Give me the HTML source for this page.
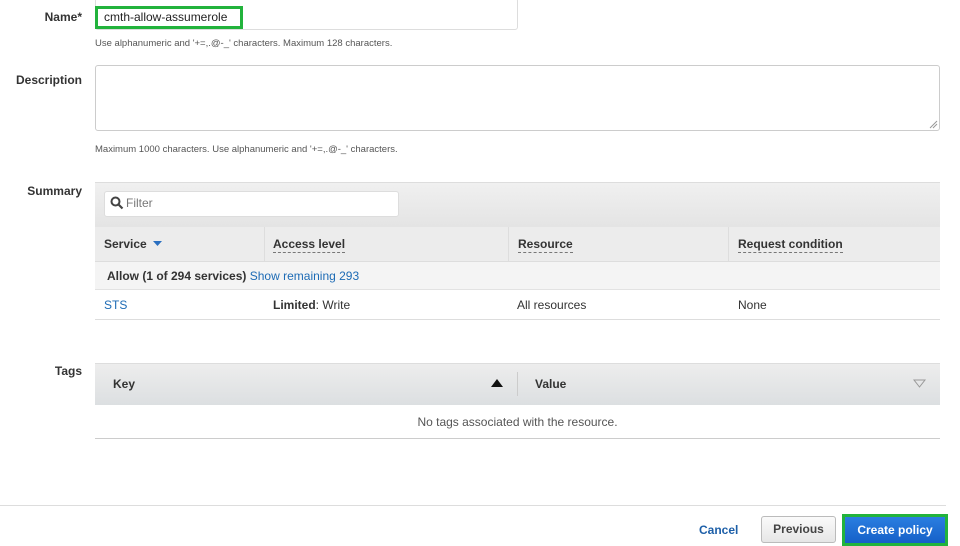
<!DOCTYPE html>
<html><head><style>
*{margin:0;padding:0;box-sizing:border-box}
body{width:960px;height:546px;background:#fff;font-family:"Liberation Sans",Arial,sans-serif;position:relative;overflow:hidden;color:#16191f}
.a{position:absolute}
.lbl{font-size:12px;font-weight:bold;color:#333;text-align:right;width:82px;left:0}
.hint{font-size:9.5px;color:#555}
.th{font-size:12px;font-weight:bold;color:#333}
.dot{border-bottom:1px dashed #777;padding-bottom:1px}
.cell{font-size:12px;color:#333}
</style></head><body>
<div class="a" style="left:95px;top:-2px;width:423px;height:32px;border:1px solid #ddd;border-radius:3px"></div>
<div class="a" style="left:95px;top:6px;width:148px;height:23px;border:3px solid #22b33c;background:#fff"></div>
<div class="a cell" style="left:104px;top:10px;font-size:12px;color:#222">cmth-allow-assumerole</div>
<div class="a lbl" style="top:10px">Name*</div>
<div class="a hint" style="left:95px;top:38px">Use alphanumeric and '+=,.@-_' characters. Maximum 128 characters.</div>
<div class="a lbl" style="top:73px">Description</div>
<div class="a" style="left:95px;top:65px;width:845px;height:66px;border:1px solid #ccc;border-radius:3px"></div>
<svg class="a" style="left:929px;top:120px" width="9" height="9"><path d="M1 8L8 1M4 8L8 4" stroke="#999" stroke-width="1"/></svg>
<div class="a hint" style="left:95px;top:144px">Maximum 1000 characters. Use alphanumeric and '+=,.@-_' characters.</div>
<div class="a lbl" style="top:184px">Summary</div>
<div class="a" style="left:95px;top:182px;width:845px;height:45px;background:linear-gradient(#f0f0f0,#e4e4e4);border-top:1px solid #ddd"></div>
<div class="a" style="left:104px;top:191px;width:295px;height:26px;background:#fff;border:1px solid #ddd;border-radius:3px"></div>
<svg class="a" style="left:110px;top:196px" width="14" height="14"><circle cx="5.5" cy="5.5" r="4" stroke="#444" stroke-width="2" fill="none"/><path d="M8.5 8.5L12.5 12.5" stroke="#444" stroke-width="2.2"/></svg>
<div class="a" style="left:126px;top:196px;font-size:12px;color:#777">Filter</div>
<div class="a" style="left:95px;top:227px;width:845px;height:35px;background:#ececec;border-bottom:1px solid #ddd"></div>
<div class="a" style="left:264px;top:227px;width:1px;height:35px;background:#ddd"></div>
<div class="a" style="left:508px;top:227px;width:1px;height:35px;background:#ddd"></div>
<div class="a" style="left:728px;top:227px;width:1px;height:35px;background:#ddd"></div>
<div class="a th" style="left:104px;top:237px">Service</div>
<svg class="a" style="left:153px;top:241px" width="9" height="6"><path d="M0 0H9L4.5 5Z" fill="#2a6fc0"/></svg>
<div class="a th" style="left:273px;top:237px"><span class="dot">Access level</span></div>
<div class="a th" style="left:518px;top:237px"><span class="dot">Resource</span></div>
<div class="a th" style="left:738px;top:237px"><span class="dot">Request condition</span></div>
<div class="a" style="left:95px;top:262px;width:845px;height:28px;background:#f4f4f4;border-bottom:1px solid #e2e2e2"></div>
<div class="a cell" style="left:107px;top:269px"><b>Allow (1 of 294 services)</b> <span style="color:#1d6bb5">Show remaining 293</span></div>
<div class="a" style="left:95px;top:319px;width:845px;height:1px;background:#ddd"></div>
<div class="a cell" style="left:104px;top:298px;color:#1d6bb5">STS</div>
<div class="a cell" style="left:273px;top:298px"><b>Limited</b>: Write</div>
<div class="a cell" style="left:517px;top:298px">All resources</div>
<div class="a cell" style="left:738px;top:298px">None</div>
<div class="a lbl" style="top:364px">Tags</div>
<div class="a" style="left:95px;top:363px;width:845px;height:42px;background:linear-gradient(#ededed,#dcdfe1);border-top:1px solid #ddd"></div>
<div class="a" style="left:517px;top:372px;width:1px;height:24px;background:#ccc"></div>
<div class="a th" style="left:113px;top:377px">Key</div>
<svg class="a" style="left:491px;top:379px" width="12" height="9"><path d="M6 0L12 8H0Z" fill="#111"/></svg>
<div class="a th" style="left:535px;top:377px">Value</div>
<svg class="a" style="left:913px;top:379px" width="13" height="9"><path d="M1 1H12L6.5 8Z" fill="none" stroke="#999" stroke-width="1"/></svg>
<div class="a cell" style="left:95px;width:845px;text-align:center;top:415px;color:#555">No tags associated with the resource.</div>
<div class="a" style="left:95px;top:438px;width:845px;height:1px;background:#ccc"></div>
<div class="a" style="left:0;top:505px;width:946px;height:1px;background:#ddd"></div>
<div class="a" style="left:699px;top:523px;font-size:12px;font-weight:bold;color:#1d5fa8">Cancel</div>
<div class="a" style="left:761px;top:516px;width:75px;height:27px;border:1px solid #bbb;border-radius:3px;background:linear-gradient(#fafafa,#e6e6e6);font-size:12px;font-weight:bold;color:#444;text-align:center;line-height:25px">Previous</div>
<div class="a" style="left:842px;top:514px;width:106px;height:32px;border:3px solid #22b33c;background:linear-gradient(#2a7ee0,#1560c8);font-size:12px;font-weight:bold;color:#fff;text-align:center;line-height:26px">Create policy</div>
</body></html>
